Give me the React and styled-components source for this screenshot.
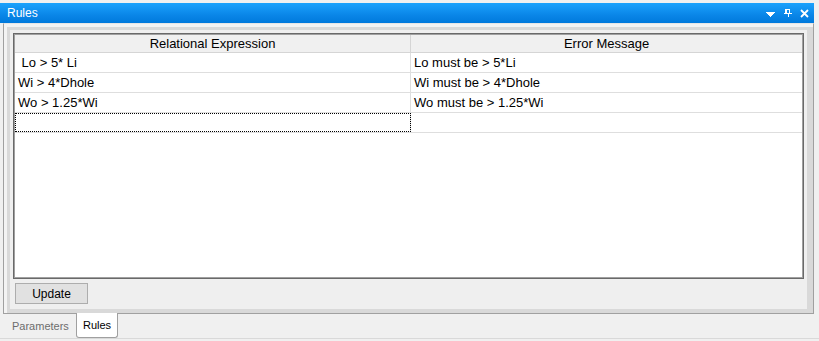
import React from "react";
import styled, { createGlobalStyle } from "styled-components";

const GlobalStyle = createGlobalStyle`
  html, body {
    margin: 0;
    background: #f0f0f0;
    font-family: "Liberation Sans", Arial, sans-serif;
  }
`;

const rules = [
  { expr: " Lo > 5* Li", msg: "Lo must be > 5*Li" },
  { expr: "Wi > 4*Dhole", msg: "Wi must be > 4*Dhole" },
  { expr: "Wo > 1.25*Wi", msg: "Wo must be > 1.25*Wi" },
];

function App() {
  return (
    <>
      <GlobalStyle />
      <Window>
        <TitleBar>
          <span>Rules</span>
          <TitleButtons>
            <svg width="10" height="6" viewBox="0 0 10 6" shapeRendering="crispEdges">
              <path d="M0 0H10L5 5Z" fill="#fff" />
            </svg>
            <svg width="8" height="8" viewBox="0 0 8 8" shapeRendering="crispEdges">
              <path d="M1 0H6V4H5V1H3V4H1Z" fill="#fff" />
              <path d="M0 4H8V5H0Z M3.5 5H4.5V8H3.5Z" fill="#fff" />
            </svg>
            <svg width="9" height="9" viewBox="0 0 9 9">
              <path d="M1 1L8 8M8 1L1 8" stroke="#fff" strokeWidth="1.8" />
            </svg>
          </TitleButtons>
        </TitleBar>
        <Frame>
          <Band>
            <Content>
              <Grid>
                <HeaderRow>
                  <HeaderCell>Relational Expression</HeaderCell>
                  <HeaderCell>Error Message</HeaderCell>
                </HeaderRow>
                {rules.map((r) => (
                  <Row key={r.msg}>
                    <Cell>{r.expr}</Cell>
                    <Cell>{r.msg}</Cell>
                  </Row>
                ))}
                <Row>
                  <Cell $focused />
                  <Cell />
                </Row>
              </Grid>
              <Footer>
                <Button>Update</Button>
              </Footer>
            </Content>
          </Band>
        </Frame>
      </Window>
      <TabStrip>
        <Tab>Parameters</Tab>
        <Tab $active>Rules</Tab>
      </TabStrip>
    </>
  );
}

export default App;

const Window = styled.div`
  width: 814px;
  padding-top: 3px;
`;

const TitleBar = styled.div`
  height: 20px;
  box-sizing: border-box;
  display: flex;
  align-items: center;
  justify-content: space-between;
  padding: 0 5px 0 7px;
  background: linear-gradient(#1ba2fc, #0a86e8 60%, #0079dc);
  color: #fff;
  font-size: 12px;
`;

const TitleButtons = styled.div`
  display: flex;
  align-items: center;
  gap: 8px;
  svg {
    display: block;
  }
  svg:first-child {
    margin-top: 3px;
    margin-right: 1px;
  }
`;

const Frame = styled.div`
  margin-left: 3px;
  height: 291px;
  box-sizing: border-box;
  border: 1px solid #a0a0a0;
  border-top-color: #e6e6e6;
  padding: 3px 0 0 3px;
  background: #f3f3f3;
`;

const Band = styled.div`
  height: 100%;
  box-sizing: border-box;
  border-style: solid;
  border-color: #d9d9d9;
  border-width: 3px 6px 4px 3px;
  padding: 3px;
  background: #efefef;
`;

const Content = styled.div`
  display: flex;
  flex-direction: column;
`;

const Grid = styled.div`
  height: 246px;
  box-sizing: border-box;
  border: 1px solid #696969;
  box-shadow: inset 0 0 0 1px #a0a0a0;
  padding: 1px;
  background: #fff;
`;

const HeaderRow = styled.div`
  display: grid;
  grid-template-columns: 396px 1fr;
  height: 18px;
  box-sizing: border-box;
  border-bottom: 1px solid #d5d5d5;
  background: #f0f0f0;
`;

const HeaderCell = styled.div`
  display: flex;
  align-items: center;
  justify-content: center;
  font-size: 13px;
  color: #000;
  &:first-child {
    border-right: 1px solid #d5d5d5;
  }
`;

const Row = styled.div`
  display: grid;
  grid-template-columns: 396px 1fr;
  height: 20px;
  box-sizing: border-box;
  border-bottom: 1px solid #dedede;
`;

const Cell = styled.div`
  display: flex;
  align-items: center;
  padding-left: 3px;
  font-size: 13px;
  color: #000;
  white-space: pre;
  box-sizing: border-box;
  outline: ${(p) => (p.$focused ? "1px dotted #000" : "none")};
  outline-offset: -1px;
  &:first-child {
    border-right: 1px solid #dedede;
  }
`;

const Footer = styled.div`
  display: flex;
  padding: 4px 0 2px 2px;
`;

const Button = styled.button`
  width: 73px;
  height: 21px;
  box-sizing: border-box;
  border: 1px solid #adadad;
  background: #e1e1e1;
  font-family: "Liberation Sans", Arial, sans-serif;
  font-size: 12px;
  color: #000;
  padding: 0;
`;

const TabStrip = styled.div`
  display: flex;
  align-items: flex-start;
  height: 25px;
  box-sizing: border-box;
  border-bottom: 1px solid #d9d9d9;
  padding-left: 3px;
`;

const Tab = styled.div`
  box-sizing: border-box;
  font-size: 11px;
  ${(p) =>
    p.$active
      ? `
    margin-top: -1px;
    height: 25px;
    padding: 0 6px;
    line-height: 24px;
    background: #fff;
    color: #000;
    border: 1px solid #a0a0a0;
    border-top: none;
    border-radius: 0 0 3px 3px;
  `
      : `
    width: 73px;
    padding-left: 9px;
    line-height: 24px;
    color: #6d6d6d;
  `}
`;
